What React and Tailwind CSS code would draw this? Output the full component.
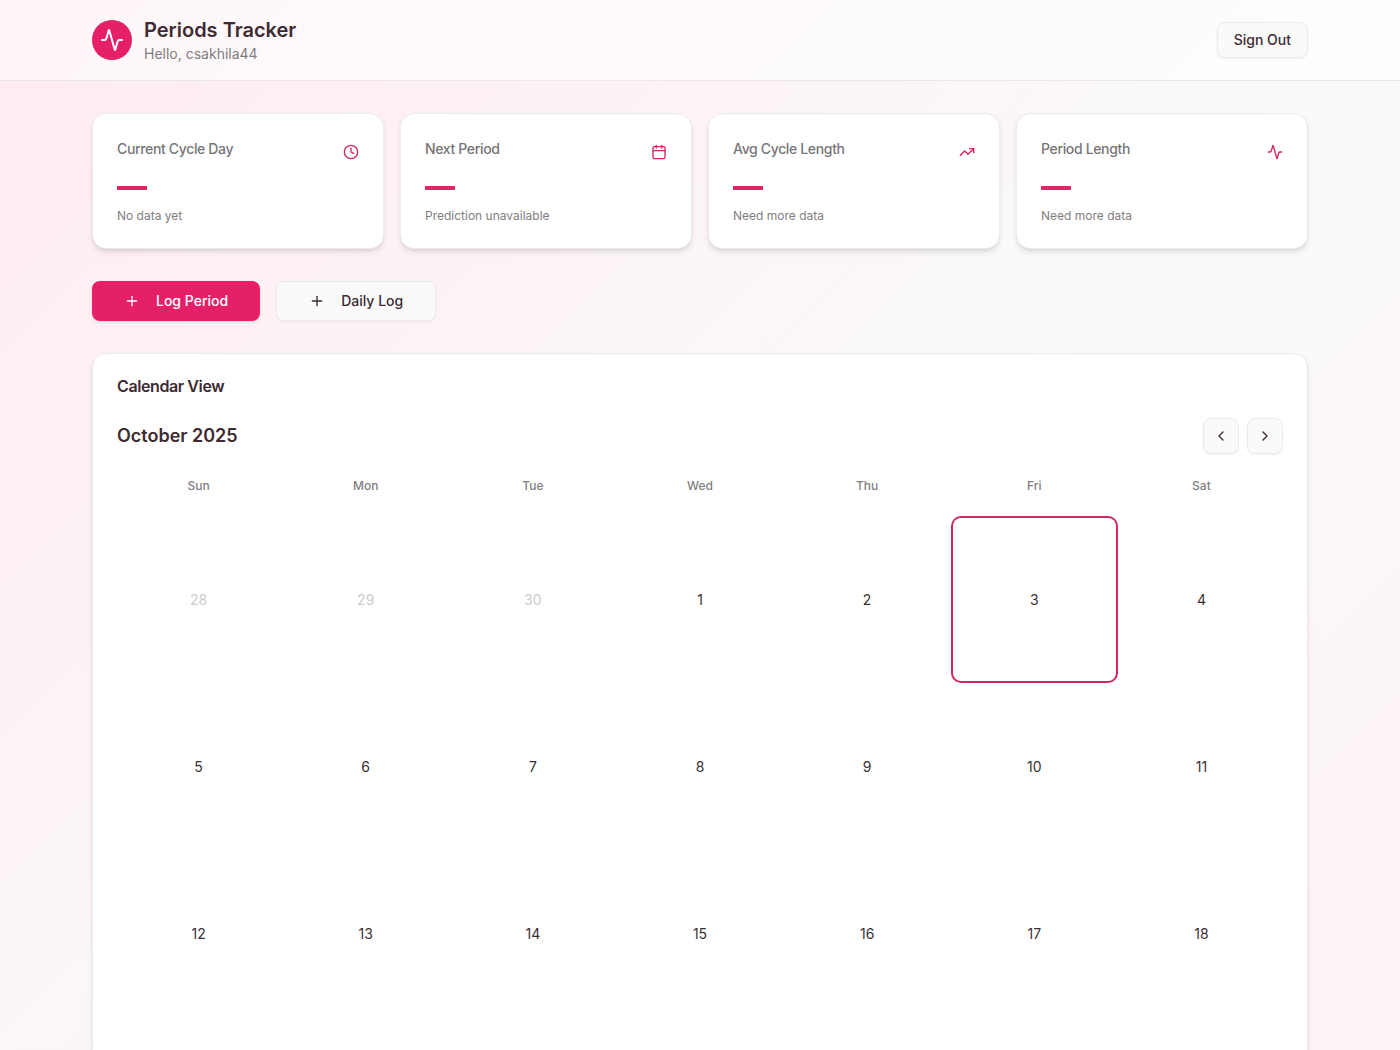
import { Activity, Calendar, ChevronLeft, ChevronRight, Clock, Plus, TrendingUp } from "lucide-react";

const stats = [
  { title: "Current Cycle Day", note: "No data yet", icon: Clock },
  { title: "Next Period", note: "Prediction unavailable", icon: Calendar },
  { title: "Avg Cycle Length", note: "Need more data", icon: TrendingUp },
  { title: "Period Length", note: "Need more data", icon: Activity },
];

const weekdays = ["Sun", "Mon", "Tue", "Wed", "Thu", "Fri", "Sat"];

const days = [
  ...[28, 29, 30].map((d) => ({ d, muted: true })),
  ...Array.from({ length: 31 }, (_, i) => ({ d: i + 1, today: i + 1 === 3 })),
  { d: 1, muted: true },
];

function StatCard({ title, note, icon: Icon }) {
  return (
    <div className="bg-white rounded-[14px] border border-[#ecebeb] shadow-md p-6 h-[136px]">
      <div className="flex items-start justify-between">
        <div className="text-sm font-medium tracking-tight leading-5 text-[#777577] pt-px">{title}</div>
        <Icon className="w-4 h-4 mt-[6px] text-[#d42565]" />
      </div>
      <div className="mt-[26px] w-[30px] h-1 bg-[#dc2668]"></div>
      <div className="mt-[18px] text-xs leading-4 text-[#807e7f]">{note}</div>
    </div>
  );
}

export default function App() {
  return (
    <div className="min-h-screen font-[Inter,sans-serif] text-[#3d2a33] bg-[linear-gradient(135deg,#ffebf0_0%,#fafafa_50%,#fff0f5_100%)]">
      <header className="bg-white/60 border-b border-[#e9e7e8]">
        <div className="max-w-7xl mx-auto px-8 py-4 flex items-center justify-between">
          <div className="flex items-center gap-3">
            <div className="w-10 h-10 rounded-full bg-[#e62068] flex items-center justify-center">
              <Activity className="w-6 h-6 text-white" />
            </div>
            <div>
              <div className="text-xl font-semibold leading-7">Periods Tracker</div>
              <div className="text-sm leading-5 text-[#7f7d7e]">Hello, csakhila44</div>
            </div>
          </div>
          <button className="h-9 px-4 rounded-lg border border-[#ecebeb] bg-[#fafafa] shadow-xs text-sm font-medium">
            Sign Out
          </button>
        </div>
      </header>

      <main className="max-w-7xl mx-auto px-8 py-8">
        <div className="grid grid-cols-4 gap-4 mb-8">
          {stats.map((s) => (
            <StatCard key={s.title} {...s} />
          ))}
        </div>

        <div className="flex gap-4 mb-8">
          <button className="h-10 px-8 rounded-lg bg-[#e62068] text-white text-sm font-medium flex items-center gap-4 shadow-sm">
            <Plus className="w-4 h-4" />
            Log Period
          </button>
          <button className="h-10 px-8 rounded-lg border border-[#ecebeb] bg-[#fafafa] text-sm font-medium flex items-center gap-4 shadow-xs">
            <Plus className="w-4 h-4" />
            Daily Log
          </button>
        </div>

        <div className="bg-white rounded-[14px] border border-[#ecebeb] shadow-md p-6">
          <div className="text-base font-semibold tracking-tight leading-none mb-6">Calendar View</div>
          <div className="flex items-center justify-between mb-4">
            <div className="text-lg font-semibold">October 2025</div>
            <div className="flex gap-2">
              <button className="w-9 h-9 rounded-lg border border-[#ecebeb] bg-[#fafafa] shadow-xs flex items-center justify-center">
                <ChevronLeft className="w-4 h-4" />
              </button>
              <button className="w-9 h-9 rounded-lg border border-[#ecebeb] bg-[#fafafa] shadow-xs flex items-center justify-center">
                <ChevronRight className="w-4 h-4" />
              </button>
            </div>
          </div>
          <div className="grid grid-cols-7 gap-1 mb-4">
            {weekdays.map((w) => (
              <div key={w} className="text-center text-xs font-medium py-2 text-[#807e7f]">
                {w}
              </div>
            ))}
          </div>
          <div className="grid grid-cols-7 gap-1">
            {days.map((c, i) => (
              <div
                key={i}
                className={
                  "aspect-square rounded-lg flex items-center justify-center text-sm " +
                  (c.muted ? "text-[#cdcccc] " : "text-[#3a3034] ") +
                  (c.today ? "ring-2 ring-[#d42565]" : "")
                }
              >
                {c.d}
              </div>
            ))}
          </div>
        </div>
      </main>
    </div>
  );
}
